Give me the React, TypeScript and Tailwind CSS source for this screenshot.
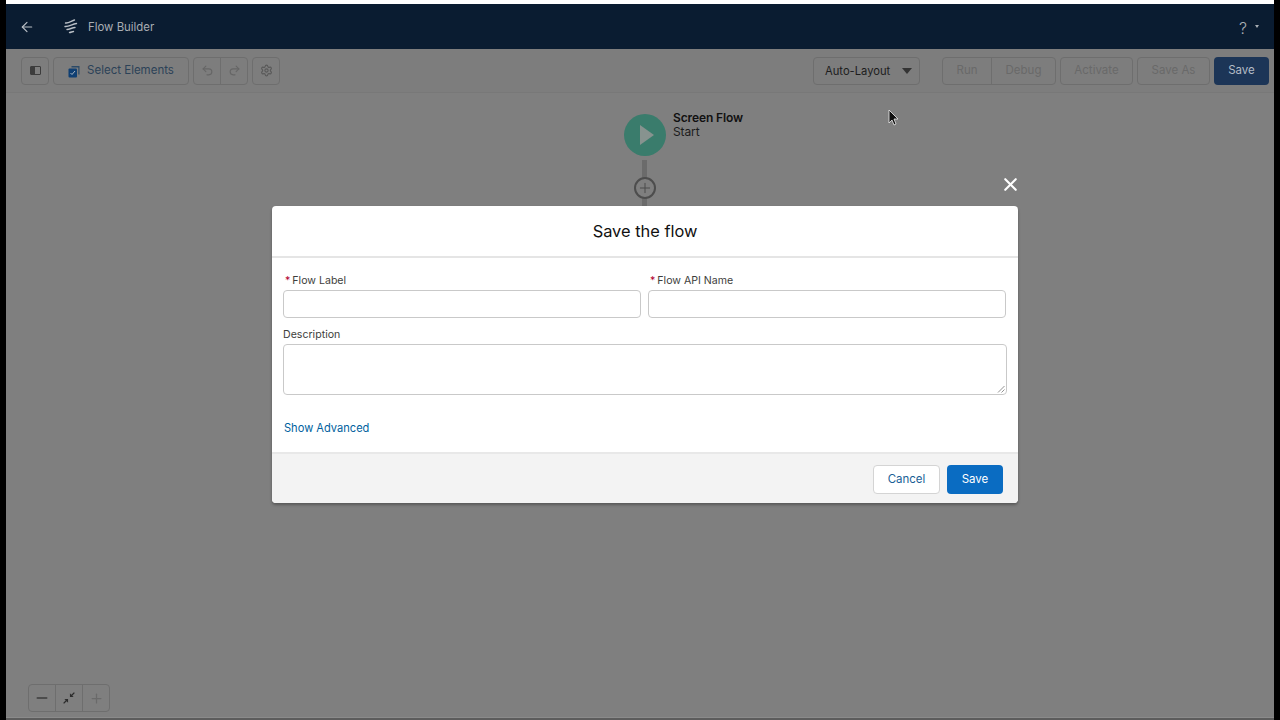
import { ArrowLeft, Minus, Plus, Redo2, Settings, Undo2, X } from "lucide-react"

const outlineBtn = "flex h-7 items-center border border-[#6e6e6e]"

const FlowIcon = () => (
  <svg width="14" height="15" viewBox="0 0 14 15" fill="none" stroke="#b9bfc6" strokeWidth="1.4" strokeLinecap="round">
    <path d="M1.5 4C4.5 4.5 8 1.5 10.5 1" />
    <path d="M1 7.5C5 8 8 5 12.5 4.5" />
    <path d="M3 10.5C6 10.5 8 8.5 11 8.5" />
    <path d="M5.5 13.5C7 13.5 8 12.5 9.5 12.5" />
  </svg>
)

const Field = ({ label, required }: { label: string; required?: boolean }) => (
  <div className="flex-1">
    <div className="flex h-[18px] items-center pt-[2px] text-[10.6px] leading-none text-[#3e3e3c]">
      {required && <span className="mr-[2px] ml-[2px] text-[#b0002b]">*</span>}
      {label}
    </div>
    <div className="mt-px h-[28px] rounded-[4px] border border-[#c9c9c9] bg-white" />
  </div>
)

export default function App() {
  return (
    <div className="relative flex h-[720px] w-[1280px] overflow-hidden bg-black font-['Inter',sans-serif]">
      <div className="ml-[6px] flex h-[720px] w-[1268px] flex-col bg-[#7f7f7f]">
        <div className="h-1 bg-white" />

        {/* Header */}
        <header className="flex h-[45px] items-center bg-[#0a1c31] pr-[15px] pl-[13px] text-[#a9aeb4]">
          <ArrowLeft className="h-4 w-4 text-[#b9bfc6]" strokeWidth={1.75} />
          <div className="ml-[29px]">
            <FlowIcon />
          </div>
          <span className="mt-[2px] ml-[10px] text-[11.4px]">Flow Builder</span>
          <div className="ml-auto flex items-center gap-[8px] text-[#a9aeb4]">
            <span className="mt-[2px] text-[16px] leading-none font-light">?</span>
            <span className="h-0 w-0 border-x-[2.5px] border-t-[3px] border-x-transparent border-t-[#a9aeb4]" />
          </div>
        </header>

        {/* Toolbar */}
        <div className="flex h-[44px] items-center border-b border-[#787878] bg-[#7d7d7d] pr-[5px] pl-[15px] text-[11.5px]">
          <button className={`${outlineBtn} w-7 justify-center rounded-[4px]`}>
            <span className="flex h-[9px] w-[11px] rounded-[1px] border border-[#3c3c3c]">
              <span className="w-[4px] bg-[#3c3c3c]" />
            </span>
          </button>
          <button className={`${outlineBtn} ml-[4px] w-[136px] justify-center gap-[7px] rounded-[4px] pt-px text-[#2c4258]`}>
            <svg width="12" height="13" viewBox="0 0 12 13">
              <path d="M3.5 2.5V1h8v8.5h-1.2V2.5z" fill="#2b4a68" />
              <rect x="0.5" y="3.5" width="8.5" height="9" rx="1" fill="#0f3f73" />
              <path d="M2.5 8l1.5 1.5L7 6" fill="none" stroke="#a9b5c2" strokeWidth="1" />
            </svg>
            Select Elements
          </button>
          <div className="ml-[4px] flex">
            <button className={`${outlineBtn} w-[28px] justify-center rounded-l-[4px]`}>
              <Undo2 className="h-[13px] w-[13px] text-[#666]" />
            </button>
            <button className={`${outlineBtn} -ml-px w-[28px] justify-center rounded-r-[4px]`}>
              <Redo2 className="h-[13px] w-[13px] text-[#666]" />
            </button>
          </div>
          <button className={`${outlineBtn} ml-[4px] w-7 justify-center rounded-[4px]`}>
            <Settings className="h-[13px] w-[13px] text-[#585858]" />
          </button>

          <button className={`${outlineBtn} ml-auto w-[107px] justify-between rounded-[4px] pt-px pr-[7px] pl-[11px] text-[11.2px] text-[#1c1c1c]`}>
            Auto-Layout
            <span className="h-0 w-0 border-x-[5px] border-t-[6px] border-x-transparent border-t-[#333]" />
          </button>
          <div className="ml-[22px] flex text-[#696969]">
            <button className={`${outlineBtn} w-[50px] justify-center rounded-l-[4px] pt-px`}>Run</button>
            <button className={`${outlineBtn} -ml-px w-[65px] justify-center rounded-r-[4px] pt-px`}>Debug</button>
          </div>
          <button className={`${outlineBtn} ml-[4px] w-[73px] justify-center rounded-[4px] pt-px text-[#696969]`}>Activate</button>
          <button className={`${outlineBtn} ml-[4px] w-[73px] justify-center rounded-[4px] pt-px text-[#696969]`}>Save As</button>
          <button className="ml-[4px] flex h-7 w-[55px] items-center justify-center rounded-[4px] bg-[#1c3557] pt-px text-[#b4bcc6]">
            Save
          </button>
        </div>

        <div className="flex-1" />

        {/* Zoom controls */}
        <div className="mb-[5px] ml-[22px] flex">
          <button className={`${outlineBtn} w-[28px] justify-center rounded-l-[4px]`}>
            <Minus className="h-[16px] w-[16px] text-[#3c3c3c]" strokeWidth={2.5} />
          </button>
          <button className={`${outlineBtn} -ml-px w-[28px] justify-center`}>
            <svg width="14" height="14" viewBox="0 0 12 12" fill="#2c2c2c">
              <path d="M11 1.8L10.2 1 8 3.2 6.8 2v3.2H10L8.8 4zM1 10.2l.8.8L4 8.8 5.2 10V6.8H2L3.2 8z" />
            </svg>
          </button>
          <button className={`${outlineBtn} -ml-px w-[28px] justify-center rounded-r-[4px]`}>
            <Plus className="h-[15px] w-[15px] text-[#6a6a6a]" />
          </button>
        </div>

        {/* Bottom edge of the recording */}
        <div className="h-[3px] border-t border-[#8a8a8a] bg-[#5c5c5c]" />
      </div>

      {/* Start node on the canvas */}
      <div className="absolute top-[114px] left-[624px] flex h-[42px] w-[42px] items-center justify-center rounded-full bg-[#3a7c6c]">
        <span className="ml-[4px] h-0 w-0 border-y-[10px] border-l-[14px] border-y-transparent border-l-[#87938f]" />
      </div>
      <div className="absolute top-[111px] left-[673px] text-[12px] leading-[14px] tracking-[-0.01em] text-[#111]">
        <div className="font-semibold">Screen Flow</div>
        <div className="text-[#1c1c1c]">Start</div>
      </div>
      <div className="absolute top-[160px] left-[642px] h-[46px] w-[5px] bg-[#6b6b6b]" />
      <div className="absolute top-[177px] left-[634px] flex h-[22px] w-[22px] items-center justify-center rounded-full border-2 border-[#4d4d4d] bg-[#7f7f7f]">
        <Plus className="h-[16px] w-[16px] text-[#4d4d4d]" strokeWidth={1.5} />
      </div>

      {/* Mouse cursor */}
      <svg className="absolute top-[109px] left-[888px]" width="12" height="18" viewBox="0 0 12 18">
        <path d="M1 1v13l3-3 2 5 2-1-2-5h4z" fill="#111" stroke="#eee" strokeWidth="0.8" />
      </svg>

      <X className="absolute top-[174px] left-[1000px] h-[21px] w-[21px] text-white" strokeWidth={2.5} />

      {/* Save dialog */}
      <div className="absolute top-[206px] left-[272px] w-[746px] overflow-hidden rounded-[4px] bg-white shadow-[0_2px_3px_rgba(0,0,0,0.3)]">
        <div className="flex h-[52px] items-center justify-center border-b-2 border-[#e5e5e5] text-[16.4px] text-[#111]">
          Save the flow
        </div>
        <div className="h-[194px] pt-[13px] pr-[11px] pl-[11px]">
          <div className="flex gap-[7px] pr-px">
            <Field label="Flow Label" required />
            <Field label="Flow API Name" required />
          </div>
          <div className="mt-[8px] flex h-[18px] items-center text-[10.6px] leading-none text-[#3e3e3c]">Description</div>
          <div className="relative h-[51px] rounded-[4px] border border-[#c9c9c9] bg-white">
            <svg className="absolute right-[1px] bottom-[1px]" width="8" height="8" viewBox="0 0 8 8" stroke="#777" strokeWidth="0.8">
              <path d="M1 7.5L7.5 1M4.5 7.5L7.5 4.5" />
            </svg>
          </div>
          <a className="mt-[25px] ml-px block text-[11.1px] leading-[16px] text-[#005f9e]">Show Advanced</a>
        </div>
        <div className="flex h-[51px] items-center justify-end gap-[7px] border-t-2 border-[#e8e8e8] bg-[#f3f3f3] pt-[2px] pr-[15px]">
          <button className="h-[29px] w-[67px] rounded-[4px] border border-[#d4d4d4] bg-white text-[11.5px] text-[#1a5f96]">Cancel</button>
          <button className="h-[29px] w-[56px] rounded-[4px] bg-[#0a6cc2] text-[11.5px] text-white">Save</button>
        </div>
      </div>
    </div>
  )
}
